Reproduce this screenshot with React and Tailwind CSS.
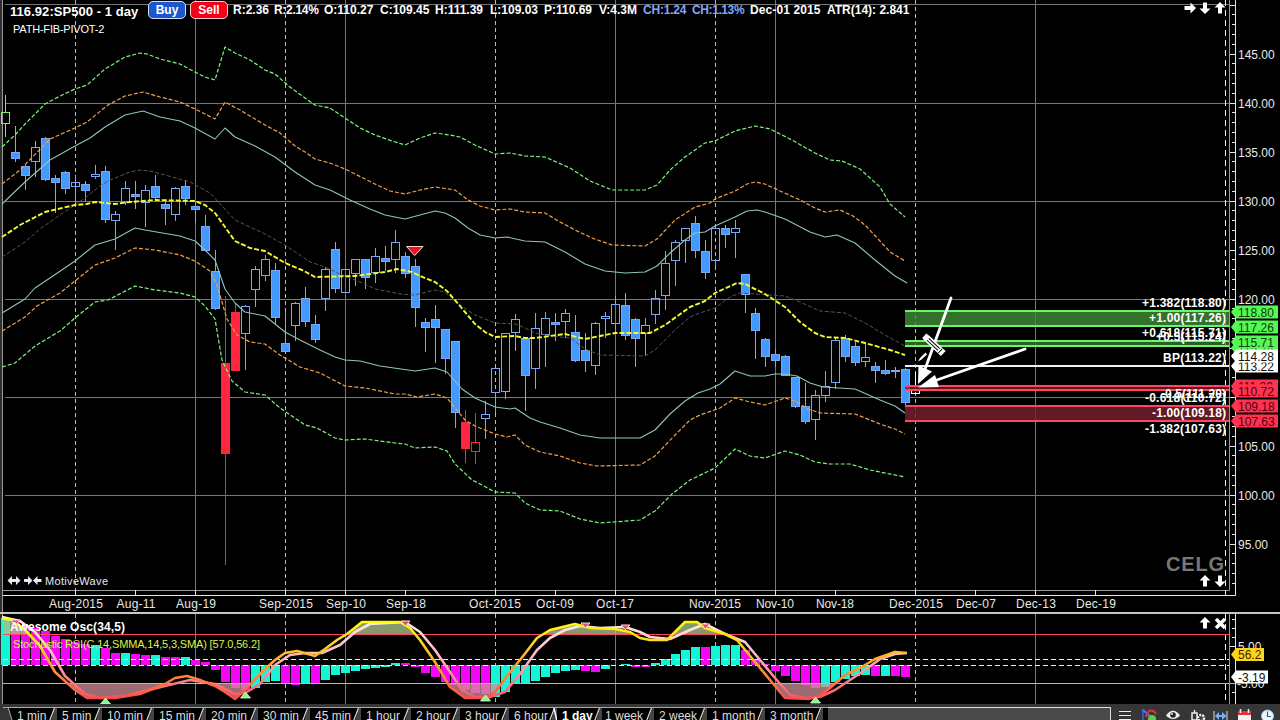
import React from 'react';

// [x, high, open/close top, open/close bottom, low, type]
// f = filled, h = hollow, r = red filled, rh = red hollow, g = green hollow, w = white hollow
const candles = [
  [5, 95, 112, 124, 137, 'g'], [15, 126, 152, 159, 162, 'f'], [25, 165, 166, 176, 190, 'f'], [35, 141, 147, 162, 177, 'h'],
  [45, 137, 138, 180, 181, 'f'], [55, 175, 178, 183, 213, 'f'], [65, 171, 172, 189, 194, 'f'], [75, 176, 182, 187, 203, 'h'],
  [85, 181, 184, 191, 201, 'f'], [95, 165, 174, 177, 179, 'h'], [105, 166, 171, 220, 223, 'f'], [115, 211, 214, 221, 250, 'h'],
  [125, 181, 188, 203, 205, 'h'], [135, 181, 194, 197, 209, 'f'], [145, 185, 190, 203, 227, 'h'], [155, 175, 186, 198, 201, 'f'],
  [165, 200, 204, 209, 225, 'f'], [175, 187, 188, 215, 221, 'h'], [185, 180, 186, 199, 205, 'f'], [195, 202, 206, 210, 223, 'f'],
  [205, 215, 226, 251, 251, 'f'], [215, 250, 271, 309, 310, 'f'], [225, 296, 363, 454, 565, 'r'], [235, 304, 312, 371, 371, 'r'],
  [245, 305, 306, 334, 370, 'h'], [255, 266, 269, 290, 307, 'h'], [265, 255, 259, 276, 281, 'h'], [275, 263, 270, 318, 325, 'f'],
  [285, 312, 343, 352, 352, 'f'], [295, 302, 303, 326, 341, 'h'], [305, 287, 298, 322, 327, 'f'], [315, 315, 324, 340, 343, 'f'],
  [325, 267, 269, 299, 311, 'h'], [335, 242, 249, 289, 293, 'f'], [345, 269, 269, 293, 293, 'h'], [355, 259, 259, 274, 286, 'h'],
  [365, 259, 259, 278, 289, 'f'], [375, 248, 256, 273, 283, 'h'], [385, 246, 258, 262, 271, 'f'], [395, 230, 242, 260, 273, 'h'],
  [405, 252, 256, 274, 278, 'f'], [415, 259, 266, 308, 327, 'f'], [425, 318, 322, 328, 352, 'f'], [435, 305, 319, 328, 363, 'f'],
  [445, 329, 329, 359, 374, 'f'], [455, 341, 341, 413, 428, 'f'], [465, 410, 422, 449, 463, 'r'], [475, 413, 442, 452, 464, 'rh'],
  [485, 401, 414, 419, 439, 'h'], [495, 368, 368, 393, 413, 'h'], [505, 333, 333, 392, 399, 'h'], [515, 314, 319, 333, 351, 'h'],
  [525, 338, 338, 376, 411, 'f'], [535, 313, 328, 369, 389, 'h'], [545, 312, 318, 335, 367, 'h'], [555, 313, 322, 325, 341, 'f'],
  [565, 309, 313, 322, 338, 'h'], [575, 315, 332, 361, 362, 'f'], [585, 333, 350, 361, 372, 'f'], [595, 322, 323, 366, 375, 'h'],
  [605, 312, 316, 319, 338, 'h'], [615, 296, 304, 324, 333, 'h'], [625, 293, 305, 336, 340, 'f'], [635, 318, 319, 339, 367, 'f'],
  [645, 318, 325, 334, 356, 'h'], [655, 290, 298, 315, 324, 'h'], [665, 251, 263, 296, 310, 'h'], [675, 240, 242, 261, 286, 'h'],
  [685, 228, 228, 241, 263, 'h'], [695, 216, 223, 251, 258, 'f'], [705, 240, 251, 273, 279, 'f'], [715, 228, 228, 261, 266, 'h'],
  [725, 225, 228, 235, 248, 'f'], [735, 220, 228, 233, 258, 'h'], [745, 274, 274, 295, 313, 'f'], [755, 308, 313, 331, 359, 'f'],
  [765, 338, 339, 357, 367, 'f'], [775, 349, 354, 361, 367, 'f'], [785, 355, 356, 376, 376, 'f'], [795, 377, 377, 407, 408, 'f'],
  [805, 383, 406, 422, 424, 'f'], [815, 390, 395, 420, 440, 'h'], [825, 371, 386, 396, 402, 'h'], [835, 337, 340, 383, 389, 'h'],
  [845, 335, 338, 357, 362, 'f'], [855, 342, 346, 363, 366, 'f'], [865, 343, 357, 362, 367, 'h'], [875, 362, 366, 371, 383, 'f'],
  [885, 360, 370, 374, 375, 'f'], [895, 367, 370, 372, 378, 'f'], [905, 368, 369, 403, 407, 'f'], [915, 372, 390, 394, 394, 'w'],
];

const bands = {
  greenUp: '2,147 15,135 27,122 45,104 60,96 75,89 87,85 105,69 125,57 140,53 147,54 160,59 180,64 193,71 205,77 215,80 225,47 235,53 250,60 265,70 275,74 290,87 305,98 315,105 330,108 345,118 360,128 375,135 392,141 405,145 420,138 435,133 450,135 460,137 475,145 495,154 510,153 525,156 545,157 570,168 590,181 612,190 645,190 657,185 670,170 685,157 705,143 715,141 735,131 755,126 770,129 790,139 815,153 830,160 842,161 860,169 880,187 890,204 905,217',
  orangeUp: '2,184 20,170 50,139 75,128 87,122 108,105 125,96 143,92 160,97 180,102 195,109 215,119 225,102 240,110 265,125 280,133 295,146 305,152 315,159 330,163 345,169 375,184 390,191 405,194 420,190 435,187 455,190 468,200 480,206 495,210 510,209 525,212 545,213 560,222 575,230 592,238 612,245 645,246 657,239 675,220 695,207 710,203 715,199 735,191 747,184 755,182 765,184 780,191 800,200 815,208 825,212 840,210 853,216 865,225 880,241 890,252 905,261',
  tealUp: '2,204 25,182 50,160 75,146 90,138 105,127 125,115 143,111 160,117 180,121 195,128 215,139 225,128 235,137 255,146 275,157 295,172 315,185 330,190 350,200 370,209 385,215 405,219 420,215 435,211 445,213 455,218 468,228 480,235 495,238 507,237 525,241 545,242 565,252 585,264 605,271 625,273 645,272 657,266 670,253 685,240 695,233 705,232 715,226 735,217 747,211 757,210 765,212 785,219 810,232 825,237 837,235 855,243 875,260 895,276 907,283',
  mid: '2,257 25,242 40,229 60,215 85,198 100,186 110,180 130,172 140,170 150,171 165,175 190,182 210,193 235,220 265,234 285,245 310,262 325,267 340,274 360,282 375,289 400,294 415,295 435,290 445,292 460,305 475,315 495,323 515,324 525,328 535,333 560,337 570,338 585,349 600,355 645,356 655,350 675,330 690,317 700,313 715,308 730,297 740,293 755,294 785,296 800,302 820,311 845,313 865,323 885,335 905,346',
  yellow: '2,237 20,225 45,212 75,205 87,204 95,202 115,204 130,202 155,200 195,201 205,205 215,213 235,241 250,248 265,251 285,263 302,270 315,277 355,276 385,272 397,269 412,272 420,276 435,282 447,291 460,306 475,324 485,332 495,337 515,336 525,338 535,338 550,336 565,334 585,339 600,336 615,333 650,333 665,325 690,307 705,301 715,293 737,283 745,284 765,294 785,307 800,322 815,333 825,337 845,338 865,343 890,350 905,355',
  tealLow: '2,313 25,299 35,288 50,278 75,261 95,245 115,239 135,228 145,230 180,236 195,241 205,250 215,260 225,289 235,303 245,312 265,316 285,332 300,340 320,350 335,357 345,360 360,361 380,366 415,371 435,368 447,372 462,389 475,398 495,407 510,409 515,408 530,418 540,422 560,428 580,435 600,438 640,438 655,430 670,414 685,401 698,393 710,389 720,384 735,371 750,376 765,376 775,374 785,374 797,376 810,383 823,387 855,389 880,400 895,406 905,413',
  orangeLow: '2,331 25,317 37,306 60,293 75,281 95,265 115,258 135,248 155,250 180,255 195,261 210,271 217,285 227,319 237,335 250,342 265,344 280,355 300,367 320,373 345,386 365,388 395,394 405,394 417,397 435,394 447,398 465,420 475,426 495,434 507,437 515,435 525,445 540,452 560,456 580,463 597,466 640,465 655,456 675,435 690,420 700,415 720,408 735,398 750,402 765,405 785,398 795,401 808,409 820,413 855,414 880,424 895,429 905,434',
  greenLow: '2,367 15,363 35,346 60,331 75,318 95,302 108,300 135,286 155,290 180,293 195,297 205,306 215,319 222,360 232,381 245,392 265,395 280,408 305,425 317,428 335,438 345,440 365,439 395,443 405,444 415,448 435,447 447,451 455,464 472,480 480,484 495,492 515,493 525,503 540,510 560,511 580,519 600,523 640,520 655,511 672,494 690,480 715,468 735,449 750,456 765,458 785,451 800,455 815,462 830,464 850,464 870,470 905,477',
};

// histogram: [x, y of the free end, color]
const histo = [
  [5, 618, 'c'], [15, 620, 'm'], [25, 625, 'm'], [35, 628, 'm'], [45, 631, 'm'], [55, 636, 'm'], [65, 639, 'm'], [75, 642, 'm'],
  [85, 644, 'm'], [95, 645, 'c'], [105, 648, 'm'], [115, 653, 'm'], [125, 653, 'c'], [135, 654, 'm'], [145, 655, 'm'], [155, 655, 'c'],
  [165, 657, 'm'], [175, 657, 'm'], [185, 657, 'c'], [195, 660, 'm'], [205, 662, 'm'], [215, 670, 'm'], [225, 682, 'm'], [235, 688, 'm'],
  [245, 690, 'm'], [255, 688, 'c'], [265, 682, 'c'], [275, 681, 'c'], [285, 683, 'm'], [295, 685, 'm'], [305, 684, 'c'], [315, 683, 'm'],
  [325, 680, 'c'], [335, 675, 'c'], [345, 673, 'c'], [355, 671, 'c'], [365, 669, 'c'], [375, 668, 'c'], [385, 667, 'c'], [395, 663, 'c'],
  [405, 663, 'm'], [415, 667, 'm'], [425, 673, 'm'], [435, 677, 'm'], [445, 682, 'm'], [455, 685, 'm'], [465, 690, 'm'], [475, 693, 'm'],
  [485, 694, 'm'], [495, 697, 'c'], [505, 692, 'c'], [515, 684, 'c'], [525, 683, 'c'], [535, 681, 'c'], [545, 677, 'c'], [555, 673, 'c'],
  [565, 671, 'c'], [575, 670, 'c'], [585, 671, 'm'], [595, 672, 'm'], [605, 669, 'c'], [625, 664, 'c'], [635, 667, 'm'], [645, 667, 'm'],
  [655, 663, 'c'], [665, 659, 'c'], [675, 654, 'c'], [685, 650, 'c'], [695, 647, 'c'], [705, 647, 'm'], [715, 646, 'c'], [725, 645, 'c'],
  [735, 645, 'c'], [745, 650, 'm'], [755, 659, 'm'], [765, 664, 'm'], [775, 671, 'm'], [785, 676, 'm'], [795, 681, 'm'], [805, 685, 'm'],
  [815, 688, 'm'], [825, 687, 'c'], [835, 682, 'c'], [845, 679, 'c'], [855, 676, 'c'], [865, 675, 'c'], [875, 676, 'm'], [885, 676, 'c'],
  [895, 676, 'm'], [905, 677, 'm'],
];

const kLine = '2,618 12,620 25,630 40,646 55,672 75,690 87,698 115,698 140,694 165,684 175,678 187,676 200,680 215,686 225,692 235,699 245,690 262,672 275,660 285,653 297,651 315,656 325,649 337,640 347,634 362,622 400,622 410,628 420,640 435,662 450,687 465,698 485,698 495,692 510,672 520,660 537,638 550,630 575,624 590,628 615,629 630,632 640,638 650,640 667,640 685,622 697,622 705,628 725,634 737,640 755,662 775,686 785,698 808,699 820,696 830,688 845,675 860,668 875,659 895,652 907,653';
const dLine = '2,617 20,621 35,632 50,650 65,676 85,694 100,698 125,696 165,686 190,680 215,684 235,694 245,693 260,684 275,665 290,655 305,653 322,653 340,645 355,632 370,624 405,622 420,632 435,650 450,672 462,690 475,697 487,698 505,692 520,674 537,650 550,638 565,630 580,626 600,628 625,627 640,632 650,637 670,639 690,630 705,624 725,634 745,642 760,660 775,678 790,695 805,698 820,697 835,690 850,680 865,670 880,659 895,654 907,653';

const dashedX = [75, 285, 495, 715, 915];
const solidX = [195, 345, 615, 775, 1035];

// [center, label, width]
const months = [
  [76, 'Aug-2015', 54], [136, 'Aug-11', 39], [196, 'Aug-19', 40], [286, 'Sep-2015', 54], [346, 'Sep-10', 40], [406, 'Sep-18', 40],
  [495, 'Oct-2015', 52], [555, 'Oct-09', 38], [615, 'Oct-17', 38], [715, 'Nov-2015', 52], [775, 'Nov-10', 38], [835, 'Nov-18', 38],
  [916, 'Dec-2015', 54], [976, 'Dec-07', 40], [1036, 'Dec-13', 40], [1096, 'Dec-19', 40],
];

const prices = [
  [54, '145.00'], [103, '140.00'], [152, '135.00'], [201, '130.00'], [250, '125.00'], [299, '120.00'],
  [446, '105.00'], [495, '100.00'], [544, '95.00'],
];

const fibs = [
  [302, '+1.382(118.80)', 84], [317, '+1.00(117.26)', 77], [332, '+0.618(115.71)', 84], [336, '+0.5(115.24)', 70],
  [357, 'BP(113.22)', 63], [393, '-0.5(111.20)', 65], [397, '-0.618(110.72)', 81], [412, '-1.00(109.18)', 74], [428, '-1.382(107.63)', 81],
];

const tags = [
  [348, '115.24', '#55f855', '#0b400b'], [312, '118.80', '#55f855', '#0b400b'], [327, '117.26', '#55f855', '#0b400b'],
  [342, '115.71', '#55f855', '#0b400b'], [366, '113.22', '#ffffff', '#111111'], [356, '114.28', '#ffffff', '#111111'],
  [386, '111.20', '#ff3350', '#500010'], [391, '110.72', '#ff3350', '#500010'], [406, '109.18', '#ff3350', '#500010'],
  [421, '107.63', '#ff3350', '#500010'],
];

const quote = [
  ['R:2.36', 'w-[41px]'], ['R:2.14%', 'w-[50px] tracking-[-0.3px]'], ['O:110.27', 'w-[56px]'], ['C:109.45', 'w-[55px]'],
  ['H:111.39', 'w-[55px]'], ['L:109.03', 'w-[54px]'], ['P:110.69', 'w-[55px]'], ['V:4.3M', 'w-[44px]'],
  ['CH:1.24', 'w-[49px] tracking-[-0.2px] text-[#7fa8ff]'], ['CH:1.13%', 'w-[58px] tracking-[-0.4px] text-[#7fa8ff]'],
  ['Dec-01 2015', 'w-[77px] tracking-[0.1px]'], ['ATR(14): 2.841', 'w-[90px]'],
];

const tabs = [
  ['1 min', 'w-[45px]'], ['5 min', 'w-[45px]'], ['10 min', 'w-[52px]'], ['15 min', 'w-[52px]'], ['20 min', 'w-[52px]'],
  ['30 min', 'w-[52px]'], ['45 min', 'w-[51px]'], ['1 hour', 'w-[50px]'], ['2 hour', 'w-[49px]'], ['3 hour', 'w-[49px]'],
  ['6 hour', 'w-[48px]'], ['1 day', 'w-[43px]'], ['1 week', 'w-[54px]'], ['2 week', 'w-[53px]'], ['1 month', 'w-[58px]'],
  ['3 month', 'w-[58px]'],
];

const colors = { f: '#4499ff', h: '#7da7f5', r: '#ff2440', rh: '#ff2440', g: '#7cf060', w: '#ffffff' };

const Candle = ({ data: [x, high, top, bottom, low, type] }) => {
  const solid = type === 'f' || type === 'r';
  const wick = type === 'f' ? '#7da7f5' : colors[type];
  return (
    <g fill={wick}>
      <rect x={x} y={high} width="1" height={top - high} />
      <rect x={x} y={bottom} width="1" height={low - bottom} />
      <rect
        x={x - 3.5}
        y={top + 0.5}
        width="8"
        height={Math.max(bottom - top - 1, 1)}
        fill={solid ? colors[type] : 'none'}
        stroke={wick}
      />
    </g>
  );
};

const ARROW = 'M0 -6L5.5 -.5H2V5.5H-2V-.5H-5.5Z';

const Arrow = ({ x, y, turn = 0 }) => (
  <path d={ARROW} fill="#fff" transform={`translate(${x} ${y}) rotate(${turn})`} />
);

const Tag = ({ y, text, fill, color, width = 42 }) => (
  <g>
    <path d={`M1231 ${y}L1236 ${y - 6.5}H${1236 + width}V${y + 6.5}H1236Z`} fill={fill} />
    <text x="1238" y={y + 4.5} fill={color}>{text}</text>
  </g>
);

const GridX = ({ from, to }) => (
  <g>
    {solidX.map((x) => <path key={x} d={`M${x + 0.5} ${from}V${to}`} stroke="#777" />)}
    {dashedX.map((x) => <path key={x} d={`M${x + 0.5} ${from}V${to}`} stroke="#bbb" strokeDasharray="4 3" />)}
    <path d={`M1225.5 ${from}V${to}`} stroke="#eee" strokeDasharray="6 4" />
  </g>
);

const Header = () => (
  <div className="flex items-start h-10 text-white font-bold z-10 [grid-area:1/1] whitespace-nowrap">
    <div className="w-[148px] pl-[10px] pt-1 text-[13px] leading-4">
      <div className="tracking-[0.06px]">116.92:SP500 - 1 day</div>
      <div className="pl-[3px] pt-px text-[11px] font-normal leading-4 tracking-[-0.2px]">PATH-FIB-PIVOT-2</div>
    </div>
    <div className="flex gap-1 pt-[1px] text-xs">
      <button className="w-[38px] h-[18px] rounded-[5px] border border-[#cfe0ff] bg-[#1c55cc] leading-none">Buy</button>
      <button className="w-[38px] h-[18px] rounded-[5px] border border-[#ffc8cc] bg-[#f40019] leading-none">Sell</button>
    </div>
    <div className="flex pl-[5px] pt-[2px] text-[12px] leading-4">
      {quote.map(([label, cls]) => <span key={label} className={cls}>{label}</span>)}
    </div>
  </div>
);

const PriceChart = () => (
  <svg className="[grid-area:1/1] text-[12px]" width="1280" height="612" viewBox="0 0 1280 612">
    <g stroke="#777">
      {[4, 103, 201, 299, 397, 495].map((y) => <path key={y} d={`M5 ${y + 0.5}H1229`} />)}
      <path d="M3 590.5H1229.5V0" stroke="#999" fill="none" />
    </g>
    <GridX from={0} to={595} />

    {candles.map((c) => <Candle key={c[0]} data={c} />)}

    <g fill="none" strokeLinejoin="round">
      <polyline points={bands.mid} stroke="#555" strokeDasharray="4 2" />
      <polyline points={bands.greenUp} stroke="#7df77d" strokeWidth="1.2" strokeDasharray="4 2" />
      <polyline points={bands.orangeUp} stroke="#f0a04a" strokeWidth="1.2" strokeDasharray="4 2" />
      <polyline points={bands.tealUp} stroke="#8fc4b8" strokeWidth="1.1" />
      <polyline points={bands.tealLow} stroke="#8fc4b8" strokeWidth="1.1" />
      <polyline points={bands.orangeLow} stroke="#f0a04a" strokeWidth="1.2" strokeDasharray="4 2" />
      <polyline points={bands.greenLow} stroke="#7df77d" strokeWidth="1.2" strokeDasharray="4 2" />
      <polyline points={bands.yellow} stroke="#f4fb2c" strokeWidth="1.9" strokeDasharray="5 2" />
    </g>
    <path d="M406.5 246.5H423L414.7 255.5Z" fill="#f0101c" stroke="#ffd5d5" />

    {/* pivot zones */}
    <g>
      <rect x="905" y="310" width="324" height="16" fill="#3f8f38" opacity=".8" />
      <rect x="905" y="341" width="324" height="5" fill="#2e7a2a" opacity=".8" />
      <rect x="905" y="386" width="324" height="4" fill="#7a1828" opacity=".8" />
      <rect x="905" y="405" width="324" height="16" fill="#7a2030" opacity=".8" />
      <path d="M905 311H1229M905 326H1229M905 341H1229M905 346H1229" stroke="#6cf56a" strokeWidth="2" />
      <path d="M905 366H1229" stroke="#f0f0f0" strokeWidth="2" />
      <path d="M905 386H1229M905 390H1229M905 406H1229M905 421H1229" stroke="#ff4560" strokeWidth="2" />
    </g>

    {/* drawn arrows and pencil */}
    <g fill="#fff">
      <path d="M951 298L924 372M1025 349L934 381" stroke="#fff" strokeWidth="2.8" strokeLinecap="round" />
      <path d="M918 384L918.5 365.5L932 371.5Z" />
      <path d="M918 387.5L935 375L939 387Z" />
      <path d="M918 361.5L920 358L925.5 352.5L927 354.5L921.5 359.5Z" />
    </g>
    <g transform="translate(925 336.5) rotate(43)">
      <path d="M-1 0V-3L3 -3.500H25V3.500H3L-1 3Z" fill="#fff" />
      <path d="M4 -1.200H19M4 1.400H19M21 -3V3" stroke="#000" fill="none" />
    </g>

    <g className="font-bold" fill="#fff" textAnchor="end">
      {fibs.map(([y, text, w]) => (
        <text key={text} x="1226" y={y + 4.5} textLength={w}>{text}</text>
      ))}
    </g>
    <text x="1166" y="571" textLength="58" fill="#777" className="text-[20px] font-bold">CELG</text>
    <Arrow x={1190} y={8} turn={90} />
    <Arrow x={1205} y={8} turn={180} />
    <Arrow x={1220} y={8} />
    <Arrow x={1205} y={581} />
    <Arrow x={1220} y={581} turn={180} />

    {/* price axis */}
    <g stroke="#e8e8e8">
      <path d="M3 595.5H1235.5V0" fill="none" />
      {Array.from({ length: 60 }, (_, i) => {
        const y = Math.round(4.5 + i * 9.8) + 0.5;
        return <path key={i} d={`M${i % 5 === 0 ? 1230 : 1232} ${y}H1235`} />;
      })}
      {months.map(([x]) => <path key={x} d={`M${x - (x % 5) + 0.5} 590V595`} />)}
    </g>
    <g fill="#e8e8e8">
      {prices.map(([y, text]) => <text key={text} x="1238" y={y + 5}>{text}</text>)}
      {months.map(([x, text, w]) => <text key={text} x={x} y="608" textAnchor="middle" textLength={w}>{text}</text>)}
    </g>
    {tags.map(([y, text, fill, color]) => <Tag key={text} y={y} text={text} fill={fill} color={color} />)}

    <g fill="#e8e8f4">
      <path d="M7.5 580.5L12 576V579H16V576L20.5 580.5L16 585V582H12V585Z" />
      <path d="M24 579H28V576L32.5 580.5L28 585V582H24ZM41.5 579H37.5V576L33 580.5L37.5 585V582H41.5Z" />
      <text x="45" y="584.5" textLength="63" className="text-[11px]">MotiveWave</text>
    </g>
  </svg>
);

const Oscillator = () => (
  <svg className="text-[12px] shrink-0" width="1280" height="92" viewBox="0 612 1280 92">
    <defs>
      <linearGradient id="k" gradientUnits="userSpaceOnUse" x1="0" y1="618" x2="0" y2="700">
        <stop offset="0" stopColor="#ffff10" />
        <stop offset=".25" stopColor="#ffe018" />
        <stop offset=".6" stopColor="#ff9c30" />
        <stop offset="1" stopColor="#ff4848" />
      </linearGradient>
      <linearGradient id="d" gradientUnits="userSpaceOnUse" x1="0" y1="618" x2="0" y2="700">
        <stop offset="0" stopColor="#fff0e8" />
        <stop offset=".5" stopColor="#ffb0bc" />
        <stop offset="1" stopColor="#f85060" />
      </linearGradient>
      <clipPath id="over"><rect x="3" y="612" width="1226" height="22" /></clipPath>
      <clipPath id="under"><rect x="3" y="684" width="1226" height="20" /></clipPath>
    </defs>
    <GridX from={614} to={704} />
    <g>
      {histo.map(([x, y, c]) => (
        <rect
          key={x}
          x={x - 4}
          y={Math.min(y, 665)}
          width="9"
          height={Math.max(Math.abs(y - 665), 1)}
          fill={c === 'c' ? '#14f5d5' : '#f505f5'}
        />
      ))}
      <path d="M3 634.5H1229" stroke="#ff4560" />
      <path d="M3 683.5H1235" stroke="#60f560" />
      <path d="M3 659.5H1229M3 665.5H1229" stroke="#f0f0f0" strokeDasharray="5 3" />
    </g>
    <polygon points={`2,634 ${kLine} 907,634`} clipPath="url(#over)" fill="#a8c088" opacity=".8" />
    <polygon points={`2,684 ${kLine} 907,684`} clipPath="url(#under)" fill="#d09098" opacity=".75" />
    <g fill="none" strokeLinejoin="round">
      <polyline points={dLine} stroke="url(#d)" strokeWidth="2.6" />
      <polyline points={kLine} stroke="url(#k)" strokeWidth="2.6" />
    </g>
    {[[105, 700], [245, 694], [485, 697], [815, 699]].map(([x, y]) => (
      <path key={x} d={`M${x - 4.5} ${y + 4}L${x + 0.5} ${y - 2}L${x + 5.5} ${y + 4}Z`} fill="#8df58d" stroke="#d8ffd0" strokeWidth=".8" />
    ))}
    {[[15, 622], [405, 623], [585, 625], [625, 627], [705, 626]].map(([x, y]) => (
      <path key={x} d={`M${x - 4} ${y - 2}H${x + 5}L${x + 0.5} ${y + 3}Z`} fill="#e05060" stroke="#ffd8d8" />
    ))}
    <text x="10" y="631" textLength="115" fill="#fff" className="font-bold">Awesome Osc(34,5)</text>
    <text x="13" y="648" textLength="247" fill="#dcf04a" className="text-[11px]">
      Stochastic RSI(C,14,SMMA,14,5,3,SMA) [57.0,56.2]
    </text>
    <Arrow x={1205} y={623} />
    <path d="M1216 619L1225 628M1225 619L1216 628" stroke="#fff" strokeWidth="3.5" />

    <g stroke="#e8e8e8">
      <path d="M1229.5 614V704" stroke="#999" />
      <path d="M1235.5 614V704" />
      <path d="M1230 646.5H1235M1232 619.5H1235M1232 628.5H1235M1232 637.5H1235M1232 692.5H1235" />
    </g>
    <text x="1238" y="651" fill="#e8e8e8">5.00</text>
    <text x="1237" y="688" fill="#e8e8e8">-5.00</text>
    <Tag y={654.5} text="56.2" fill="#ffd21c" color="#3a2a00" width={28} />
    <Tag y={677} text="-3.19" fill="#ffffff" color="#111111" width={32} />
    <rect x="0" y="612" width="1280" height="2" fill="#c8c8c8" />
  </svg>
);

const Tab = ({ label, width }) => {
  const active = label === '1 day';
  return (
    <div className={`${width} flex shrink-0 h-[13px] bg-black border-t border-[#aaa] text-xs leading-4 whitespace-nowrap ${active ? 'font-bold text-white' : 'text-[#ddd]'}`}>
      <span className="grow">{label}</span>
      <svg className="mr-[5px] shrink-0" width="9" height="13" viewBox="0 0 9 13">
        <path d="M3 13L7 0H9V13Z" fill="#444" />
        <path d="M1.5 13L6.5 0" stroke="#ddd" strokeWidth="1.2" />
        {label === '6 hour' && <path d="M6 0L9 13" stroke="#fff" strokeWidth="1.5" />}
      </svg>
    </div>
  );
};

const Toolbar = () => (
  <div className="flex h-4 pt-[3px] bg-[#363636] overflow-hidden shrink-0">
    <svg className="shrink-0" width="17" height="13" viewBox="0 0 17 13">
      <path d="M8 0H17V13H12Z" fill="#000" />
      <path d="M3 .5H17M8 0L12 13" stroke="#aaa" fill="none" />
    </svg>
    {tabs.map(([label, width]) => <Tab key={label} label={label} width={width} />)}
    <div className="grow bg-[#4a4a4a] border-t border-r border-[#ddd]" />
    <svg className="shrink-0" width="169" height="13" viewBox="1111 707 169 13">
      <path d="M1119 711.5H1131M1119 715.5H1131M1119 719.5H1131" stroke="#eee" />
      <path d="M1143 709V720" stroke="#3a60ff" strokeWidth="1.5" />
      <path d="M1143 710L1151 717" stroke="#3a80ff" strokeWidth="2" />
      <path d="M1146 717C1147 710 1153 708 1156 714" stroke="#e8303c" strokeWidth="2" fill="none" />
      <circle cx="1152" cy="719" r="4" fill="#60c850" />
      <path d="M1166 715.5C1170 709 1176 709 1180 715.5C1176 720 1170 720 1166 715.5Z" fill="#eee" />
      <circle cx="1173" cy="715" r="2.8" fill="#222" />
      <circle cx="1172" cy="714" r=".9" fill="#fff" />
      <path d="M1192 713H1197V720H1192ZM1194.5 710V713" stroke="#eee" strokeWidth="1.5" fill="none" />
      <circle cx="1201" cy="718" r="3" fill="none" stroke="#eee" strokeWidth="2.5" strokeDasharray="2 1" />
      <path d="M1214 711V720M1227 711V720" stroke="#ddd" />
      <path d="M1215 716L1219 712V715H1222V712L1226.5 716L1222 720V717H1219V720Z" fill="#78b0ff" />
      <rect x="1238" y="711" width="13" height="10" fill="#f2f2f2" />
      <rect x="1238" y="711" width="13" height="4" fill="#e83030" />
      <path d="M1240.5 709V713M1248.5 709V713" stroke="#eee" strokeWidth="1.5" />
      <circle cx="1267.5" cy="716" r="6" fill="#eef6fb" stroke="#9cc4e0" />
      <path d="M1267.5 711.5V716.5H1271" stroke="#386080" strokeWidth="1.2" fill="none" />
    </svg>
  </div>
);

const App = () => (
  <div className="w-[1280px] h-[720px] flex flex-col bg-black overflow-hidden font-['Liberation_Sans',Arial,sans-serif]">
    <div className="flex flex-col h-[704px] shrink-0 bg-[linear-gradient(to_right,#303030_2px,#999_2px,#999_3px,transparent_3px)]">
      <div className="grid h-[612px] shrink-0">
        <PriceChart />
        <Header />
      </div>
      <Oscillator />
    </div>
    <Toolbar />
  </div>
);

export default App;
